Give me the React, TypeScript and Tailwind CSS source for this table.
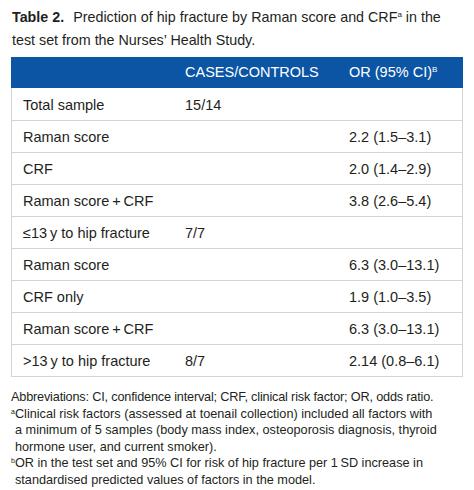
import * as React from 'react';

type Row = {
  label: React.ReactNode;
  cases?: string;
  or?: string;
};

const rows: Row[] = [
  { label: 'Total sample', cases: '15/14' },
  { label: 'Raman score', or: '2.2 (1.5–3.1)' },
  { label: 'CRF', or: '2.0 (1.4–2.9)' },
  { label: 'Raman score\u2009+\u2009CRF', or: '3.8 (2.6–5.4)' },
  { label: '≤13\u2009y to hip fracture', cases: '7/7' },
  { label: 'Raman score', or: '6.3 (3.0–13.1)' },
  { label: 'CRF only', or: '1.9 (1.0–3.5)' },
  { label: 'Raman score\u2009+\u2009CRF', or: '6.3 (3.0–13.1)' },
  { label: '>13\u2009y to hip fracture', cases: '8/7', or: '2.14 (0.8–6.1)' },
];

export default function App() {
  return (
    <div
      className="w-[474px] h-[490px] bg-white text-[#231f20] overflow-hidden"
      style={{ fontFamily: '"Liberation Sans", Arial, sans-serif' }}
    >
      <div className="px-[12px] pt-[6px] text-[14.3px] leading-[23px] whitespace-nowrap">
        <p>
          <span className="font-bold">Table 2.</span>
          <span className="ml-[9px]">Prediction of hip fracture by Raman score and CRF</span>
          <span className="text-[8px] align-[5px] leading-none">a</span>
          <span> in the</span>
        </p>
        <p>test set from the Nurses’ Health Study.</p>
      </div>

      <div className="mx-[11px] mt-[5px] border-x border-b border-[#d4d4d4]">
        <div className="grid grid-cols-[162px_163px_1fr] h-[31px] items-center bg-[#0c55a5] text-white text-[14.5px] -mx-px">
          <div />
          <div className="pl-[12px]">CASES/CONTROLS</div>
          <div className="pl-[13px]">
            OR (95% CI)<span className="text-[8px] align-[5px] leading-none">B</span>
          </div>
        </div>
        {rows.map((row, idx) => (
          <div
            key={idx}
            className={
              'grid grid-cols-[161px_163px_1fr] h-[32px] pt-[3px] items-center text-[14.5px] ' +
              (idx > 0 ? 'border-t border-[#d4d4d4]' : '')
            }
          >
            <div className="pl-[11px] whitespace-nowrap">{row.label}</div>
            <div className="pl-[12px]">{row.cases}</div>
            <div className="pl-[13px]">{row.or}</div>
          </div>
        ))}
      </div>

      <div className="px-[11px] pt-[12px] text-[12.7px] leading-[16.6px] whitespace-nowrap">
        <p className="tracking-[-0.18px]">
          Abbreviations: CI, confidence interval; CRF, clinical risk factor; OR, odds ratio.
        </p>
        <p>
          <span className="text-[7px] align-[4px] leading-none">a</span>Clinical risk factors (assessed at toenail
          collection) included all factors with
        </p>
        <p className="pl-[4px]">a minimum of 5 samples (body mass index, osteoporosis diagnosis, thyroid</p>
        <p className="pl-[4px]">hormone user, and current smoker).</p>
        <p>
          <span className="text-[7px] align-[4px] leading-none">b</span>OR in the test set and 95% CI for risk of hip
          fracture per 1{'\u2009'}SD increase in
        </p>
        <p className="pl-[4px]">standardised predicted values of factors in the model.</p>
      </div>
    </div>
  );
}
